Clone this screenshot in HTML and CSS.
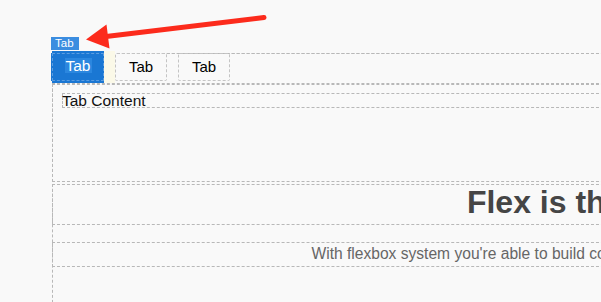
FILE: index.html
```html
<!DOCTYPE html>
<html lang="en">
<head>
<meta charset="utf-8">
<title>Tabs</title>
<link rel="stylesheet" href="styles.css">
</head>
<body>
<div class="page">
  <div class="app">
    <div class="tabs">
      <div class="tab active"><span class="badge">Tab</span><span class="tab-label">Tab</span></div>
      <div class="tab">Tab</div>
      <div class="tab">Tab</div>
    </div>
    <div class="panel">
      <div class="panel-text">Tab Content</div>
    </div>
    <div class="hero">
      <h1 class="hero-title">Flex is the best</h1>
      <p class="hero-text">With flexbox system you're able to build complex layouts easily and quickly too</p>
    </div>
  </div>
</div>
<svg class="arrow" width="601" height="60" viewBox="0 0 601 60" xmlns="http://www.w3.org/2000/svg">
  <line x1="264" y1="17.5" x2="104" y2="36.8" stroke="#fc2b1c" stroke-width="5" stroke-linecap="round"/>
  <polygon points="86,39.5 106.5,24.5 109.5,48.5" fill="#fc2b1c"/>
</svg>
</body>
</html>
```

FILE: styles.css
```css
html, body {
  margin: 0;
  padding: 0;
  overflow: hidden;
  background: #f9f9f9;
}

body {
  font-family: "Liberation Sans", Arial, sans-serif;
  color: #111;
  position: relative;
  width: 601px;
  height: 302px;
}

.page {
  padding: 53px 0 0 52px;
}

.app {
  width: 1061px;
  min-height: 260px;
  outline: 1px dashed #b8b8b8;
  outline-offset: -1px;
}

.tabs {
  display: flex;
  height: 31px;
  outline: 1px dashed #b8b8b8;
  outline-offset: -1px;
}

.tab {
  box-sizing: border-box;
  width: 52px;
  height: 28px;
  margin-right: 11px;
  border: 1px dashed #c4c4c4;
  border-radius: 2px;
  font-size: 15px;
  line-height: 26px;
  text-align: center;
  color: #000;
  position: relative;
}

.tab.active {
  background: #1a77d3;
  color: #fff;
  border-color: #5c9de0;
  border-radius: 0;
  box-shadow: -1px 0 0 0 #1a77d3, 0 -2px 0 0 #1a77d3, 0 2px 0 0 #1a77d3, 9px 0 0 2px #fbf9e8;
}

.tab-label {
  display: inline-block;
  background: #2b87df;
  line-height: 15px;
  padding: 0 1px;
  vertical-align: 1px;
  font-size: 15.5px;
}

.badge {
  position: absolute;
  left: -2px;
  top: -17px;
  height: 13px;
  line-height: 13px;
  padding: 0 5px 0 4px;
  font-size: 11.5px;
  background: #3b8de0;
  color: #fff;
}

.panel {
  box-sizing: border-box;
  height: 98px;
  padding: 9px 0 0 10px;
  outline: 1px dashed #b8b8b8;
  outline-offset: -1px;
}

.panel-text {
  font-size: 15.5px;
  line-height: 15px;
  outline: 1px dashed #b8b8b8;
  outline-offset: -1px;
}

.hero {
  padding-top: 2px;
  text-align: center;
}

.hero-title {
  margin: 0 0 17px;
  font-size: 32px;
  font-weight: bold;
  line-height: 36px;
  padding-bottom: 5px;
  color: #454545;
  outline: 1px dashed #b8b8b8;
  outline-offset: -1px;
}

.hero-text {
  margin: 0;
  font-size: 15.6px;
  line-height: 24px;
  padding-bottom: 1px;
  color: #666;
  outline: 1px dashed #b8b8b8;
  outline-offset: -1px;
}

.arrow {
  position: absolute;
  left: 0;
  top: 0;
  pointer-events: none;
}
```
